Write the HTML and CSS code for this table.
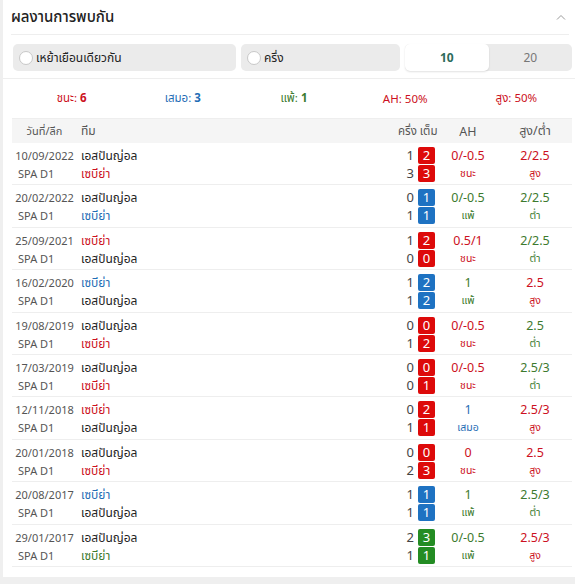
FILE: index.html
```html
<!DOCTYPE html>
<html lang="th">
<head>
<meta charset="utf-8">
<link rel="stylesheet" href="styles.css">
</head>
<body>
<div class="card">
  <div class="title-bar">
    <h2 class="title">ผลงานการพบกัน</h2>
    <svg class="chev" width="10" height="6" viewBox="0 0 10 6"><polyline points="1,5.5 5,1.5 9,5.5" fill="none" stroke="#9a9a9a" stroke-width="1"/></svg>
  </div>
  <div class="filters">
    <div class="chk wide"><span class="radio"></span>เหย้าเยือนเดียวกัน</div>
    <div class="chk half"><span class="radio"></span>ครึ่ง</div>
    <div class="seg"><span class="opt on">10</span><span class="opt">20</span></div>
  </div>
  <div class="summary">
    <span class="red">ชนะ: <b>6</b></span>
    <span class="blue">เสมอ: <b>3</b></span>
    <span class="green">แพ้: <b>1</b></span>
    <span class="red">AH: 50%</span>
    <span class="red">สูง: 50%</span>
  </div>
  <div class="table">
    <div class="row head">
      <div class="c-date">วันที่/ลีก</div>
      <div class="c-team">ทีม</div>
      <div class="c-score">ครึ่ง เต็ม</div>
      <div class="c-ah">AH</div>
      <div class="c-ou">สูง/ต่ำ</div>
    </div>

    <div class="row">
      <div class="c-date"><span>10/09/2022</span><span>SPA D1</span></div>
      <div class="c-team"><span>เอสปันญ่อล</span><span class="red">เซบีย่า</span></div>
      <div class="c-half"><span>1</span><span>3</span></div>
      <div class="c-full"><span class="bd r">2</span><span class="bd r">3</span></div>
      <div class="c-ah red"><span>0/-0.5</span><span class="sm">ชนะ</span></div>
      <div class="c-ou red"><span>2/2.5</span><span class="sm">สูง</span></div>
    </div>

    <div class="row">
      <div class="c-date"><span>20/02/2022</span><span>SPA D1</span></div>
      <div class="c-team"><span>เอสปันญ่อล</span><span class="blue">เซบีย่า</span></div>
      <div class="c-half"><span>0</span><span>1</span></div>
      <div class="c-full"><span class="bd b">1</span><span class="bd b">1</span></div>
      <div class="c-ah green"><span>0/-0.5</span><span class="sm">แพ้</span></div>
      <div class="c-ou green"><span>2/2.5</span><span class="sm">ต่ำ</span></div>
    </div>

    <div class="row">
      <div class="c-date"><span>25/09/2021</span><span>SPA D1</span></div>
      <div class="c-team"><span class="red">เซบีย่า</span><span>เอสปันญ่อล</span></div>
      <div class="c-half"><span>1</span><span>0</span></div>
      <div class="c-full"><span class="bd r">2</span><span class="bd r">0</span></div>
      <div class="c-ah red"><span>0.5/1</span><span class="sm">ชนะ</span></div>
      <div class="c-ou green"><span>2/2.5</span><span class="sm">ต่ำ</span></div>
    </div>

    <div class="row">
      <div class="c-date"><span>16/02/2020</span><span>SPA D1</span></div>
      <div class="c-team"><span class="blue">เซบีย่า</span><span>เอสปันญ่อล</span></div>
      <div class="c-half"><span>1</span><span>1</span></div>
      <div class="c-full"><span class="bd b">2</span><span class="bd b">2</span></div>
      <div class="c-ah green"><span>1</span><span class="sm">แพ้</span></div>
      <div class="c-ou red"><span>2.5</span><span class="sm">สูง</span></div>
    </div>

    <div class="row">
      <div class="c-date"><span>19/08/2019</span><span>SPA D1</span></div>
      <div class="c-team"><span>เอสปันญ่อล</span><span class="red">เซบีย่า</span></div>
      <div class="c-half"><span>0</span><span>1</span></div>
      <div class="c-full"><span class="bd r">0</span><span class="bd r">2</span></div>
      <div class="c-ah red"><span>0/-0.5</span><span class="sm">ชนะ</span></div>
      <div class="c-ou green"><span>2.5</span><span class="sm">ต่ำ</span></div>
    </div>

    <div class="row">
      <div class="c-date"><span>17/03/2019</span><span>SPA D1</span></div>
      <div class="c-team"><span>เอสปันญ่อล</span><span class="red">เซบีย่า</span></div>
      <div class="c-half"><span>0</span><span>0</span></div>
      <div class="c-full"><span class="bd r">0</span><span class="bd r">1</span></div>
      <div class="c-ah red"><span>0/-0.5</span><span class="sm">ชนะ</span></div>
      <div class="c-ou green"><span>2.5/3</span><span class="sm">ต่ำ</span></div>
    </div>

    <div class="row">
      <div class="c-date"><span>12/11/2018</span><span>SPA D1</span></div>
      <div class="c-team"><span class="red">เซบีย่า</span><span>เอสปันญ่อล</span></div>
      <div class="c-half"><span>0</span><span>1</span></div>
      <div class="c-full"><span class="bd r">2</span><span class="bd r">1</span></div>
      <div class="c-ah blue"><span>1</span><span class="sm">เสมอ</span></div>
      <div class="c-ou red"><span>2.5/3</span><span class="sm">สูง</span></div>
    </div>

    <div class="row">
      <div class="c-date"><span>20/01/2018</span><span>SPA D1</span></div>
      <div class="c-team"><span>เอสปันญ่อล</span><span class="red">เซบีย่า</span></div>
      <div class="c-half"><span>0</span><span>2</span></div>
      <div class="c-full"><span class="bd r">0</span><span class="bd r">3</span></div>
      <div class="c-ah red"><span>0</span><span class="sm">ชนะ</span></div>
      <div class="c-ou red"><span>2.5</span><span class="sm">สูง</span></div>
    </div>

    <div class="row">
      <div class="c-date"><span>20/08/2017</span><span>SPA D1</span></div>
      <div class="c-team"><span class="blue">เซบีย่า</span><span>เอสปันญ่อล</span></div>
      <div class="c-half"><span>1</span><span>1</span></div>
      <div class="c-full"><span class="bd b">1</span><span class="bd b">1</span></div>
      <div class="c-ah green"><span>1</span><span class="sm">แพ้</span></div>
      <div class="c-ou green"><span>2.5/3</span><span class="sm">ต่ำ</span></div>
    </div>

    <div class="row">
      <div class="c-date"><span>29/01/2017</span><span>SPA D1</span></div>
      <div class="c-team"><span>เอสปันญ่อล</span><span class="green">เซบีย่า</span></div>
      <div class="c-half"><span>2</span><span>1</span></div>
      <div class="c-full"><span class="bd g">3</span><span class="bd g">1</span></div>
      <div class="c-ah green"><span>0/-0.5</span><span class="sm">แพ้</span></div>
      <div class="c-ou red"><span>2.5/3</span><span class="sm">สูง</span></div>
    </div>
  </div>
</div>
</body>
</html>
```
FILE: styles.css
```css
* { box-sizing: border-box; }
html, body { margin: 0; padding: 0; }
body {
  background: #efefef;
  font-family: "Noto Sans", "Noto Sans Thai", "Open Sans", sans-serif;
  color: #222;
  font-size: 12px;
  width: 575px;
  height: 584px;
  overflow: hidden;
}
.card {
  background: #fff;
  margin-left: 3px;
  height: 577px;
  padding: 0 3px 0 9px;
}
.title-bar {
  height: 35px;
  display: flex;
  align-items: center;
  justify-content: space-between;
  border-bottom: 1px solid #eeeeee;
  margin-left: -1px;
  margin-right: 3px;
}
.title {
  margin: 0;
  font-size: 15px;
  font-weight: 500;
  color: #222;
}
.chev { margin-right: 3px; margin-top: -1px; }

.filters {
  display: flex;
  gap: 5px;
  margin-top: 9px;
  height: 27px;
  margin-left: 1px;
}
.chk {
  background: #ebebeb;
  border-radius: 5px;
  display: flex;
  align-items: center;
  padding-left: 6px;
  gap: 3px;
  font-size: 12px;
  color: #222;
}
.chk.wide { width: 223px; }
.chk.half { width: 159px; }
.radio {
  width: 14px;
  height: 14px;
  border-radius: 50%;
  background: #fff;
  border: 1px solid #c8c8c8;
}
.seg {
  flex: 1;
  display: flex;
  background: #ebebeb;
  border-radius: 5px;
}
.opt {
  flex: 1;
  display: flex;
  align-items: center;
  justify-content: center;
  color: #777;
  font-size: 12px;
}
.opt.on {
  background: #fff;
  border-radius: 5px;
  color: #2d6b5b;
  font-weight: 700;
  box-shadow: 0 1px 2px rgba(0,0,0,0.12);
}

.summary {
  border-top: 1px solid #eeeeee;
  margin: 7px -3px 0 -9px;
  padding: 0 3px 0 13px;
  height: 40px;
  display: grid;
  grid-template-columns: repeat(5, 1fr);
  align-items: center;
  justify-items: center;
  font-size: 11.5px;
}
.summary b { font-weight: 700; }

.red { color: #cc1122; }
.blue { color: #1f6db5; }
.green { color: #3d7a2e; }

.table { border-top: 1px solid #eeeeee; }
.row {
  display: grid;
  grid-template-columns: 65px 321px 16px 4px 17px 66px 68px;
  border-bottom: 1px solid #eeeeee;
  height: 42.4px;
  padding-top: 4px;
}
.row > div { display: flex; flex-direction: column; gap: 1px; }
.row > div > span { height: 17px; line-height: 17px; }
.head {
  background: #f5f5f5;
  height: 24px;
  padding-top: 0;
  align-items: center;
  color: #555;
  font-size: 11.5px;
  border-bottom: none;
}
.head > div { display: block; }
.head .c-date { text-align: center; }
.head .c-team { padding-left: 4px; }
.head .c-score { grid-column: 3 / 6; text-align: right; margin-right: -2px; white-space: nowrap; }
.head .c-ah, .head .c-ou { text-align: center; }

.c-date { align-items: center; color: #555; font-size: 11px; }
.c-date span:last-child { align-self: flex-start; padding-left: 6px; }
.c-team { padding-left: 4px; font-size: 12px; }
.c-half { grid-column: 3; align-items: flex-end; font-size: 13px; color: #444; }
.c-full { grid-column: 5; }
.bd {
  display: block;
  width: 17px;
  text-align: center;
  color: #fff;
  font-size: 13px;
  border-radius: 2px;
}
.bd.r { background: #dd0a0a; }
.bd.b { background: #1e72c2; }
.bd.g { background: #238c23; }
.c-ah, .c-ou { align-items: center; font-size: 12.5px; }
.sm { font-size: 10.5px; }
```
